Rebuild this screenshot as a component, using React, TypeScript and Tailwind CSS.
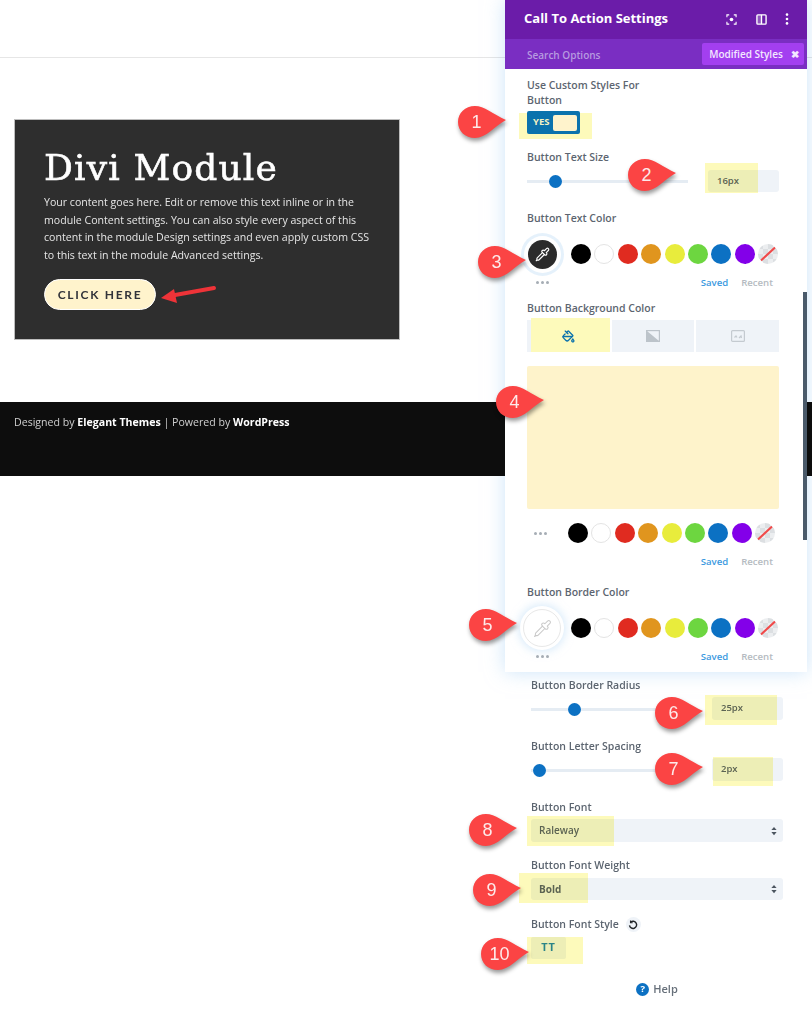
import React from "react";
import { Pipette, PaintBucket } from "lucide-react";

const swatchColors = ["bg-[#000000]", "bg-white border border-[#e4e4e4]", "bg-[#e02b20]", "bg-[#e0951e]", "bg-[#e8ec3c]", "bg-[#6dd640]", "bg-[#0c71c3]", "bg-[#8300e9]"];

function Label({ children, className = "" }: { children: React.ReactNode; className?: string }) {
  return <div className={`h-[15px] text-[10.5px] leading-[15px] font-semibold text-[#5c6570] whitespace-nowrap ${className}`}>{children}</div>;
}

function Swatches() {
  return (
    <div className="flex gap-[3.4px]">
      {swatchColors.map((c) => (
        <div key={c} className={`w-5 h-5 rounded-full ${c}`} />
      ))}
      <div className="w-5 h-5 rounded-full bg-[#eceef0] overflow-hidden">
        <svg viewBox="0 0 20 20" className="w-5 h-5">
          <path d="M0 0H5V5H0ZM10 0H15V5H10ZM5 5H10V10H5ZM15 5H20V10H15ZM0 10H5V15H0ZM10 10H15V15H10ZM5 15H10V20H5ZM15 15H20V20H15Z" fill="#dcdfe2" />
          <line x1="3" y1="16.5" x2="17" y2="3.5" stroke="#f04a4a" strokeWidth="2.2" />
        </svg>
      </div>
    </div>
  );
}

function Dots({ className = "" }: { className?: string }) {
  return (
    <div className={`flex gap-[2px] ${className}`}>
      <span className="w-[3px] h-[3px] rounded-full bg-[#a6adb5]" />
      <span className="w-[3px] h-[3px] rounded-full bg-[#a6adb5]" />
      <span className="w-[3px] h-[3px] rounded-full bg-[#a6adb5]" />
    </div>
  );
}

function SavedRecent() {
  return (
    <div className="flex gap-[13px] pr-[6px] pt-[1px] text-[9.6px] font-semibold leading-4">
      <span className="text-[#3c9ae0]">Saved</span>
      <span className="text-[#b5bbc1]">Recent</span>
    </div>
  );
}

function Slider({ value, knob }: { value: string; knob: string }) {
  return (
    <div className="flex items-center gap-5 h-full">
      <div className="relative flex-1 h-[3px] mt-[1px] bg-[#e5ecf3]">
        <div className={`absolute top-[-5px] w-[13px] h-[13px] rounded-full bg-[#0c71c3] ${knob}`} />
      </div>
      <div className="w-[71px] h-full rounded-[3px] bg-[#eff3f8] pl-[9px] text-[9.5px] font-semibold text-[#5c6570] flex items-center">{value}</div>
    </div>
  );
}

function Select({ value, bold }: { value: string; bold?: boolean }) {
  return (
    <div className={`h-full rounded-[3px] bg-[#eff3f8] pl-2 pr-[6px] flex items-center justify-between text-[10px] text-[#5c6570] ${bold ? "font-bold" : "font-semibold"}`}>
      <span>{value}</span>
      <svg viewBox="0 0 8 12" className="w-[6px] h-[10px]" fill="#4c5560">
        <path d="M4 0.5 7.5 4.8H0.5Z M4 11.5 7.5 7.2H0.5Z" />
      </svg>
    </div>
  );
}

function Marker({ n, pos }: { n: number; pos: string }) {
  return (
    <div className={`absolute w-[48px] h-[32px] ${pos}`}>
      <svg viewBox="0 0 48 32" className="absolute inset-0 w-[48px] h-[32px] overflow-visible drop-shadow-[1px_3px_2px_rgba(0,0,0,0.4)]">
        <path d="M17 0C26 0 35 8 48 14C37 20 28 32 17 32C7 32 0 25 0 16C0 7 7 0 17 0Z" fill="#fb4444" />
      </svg>
      <span className="absolute left-0 top-0 w-[37px] h-[32px] flex items-center justify-center text-[18px] text-[#fdeaea] font-['Liberation_Sans',sans-serif]">{n}</span>
    </div>
  );
}

function Hl({ pos }: { pos: string }) {
  return <div className={`absolute bg-[#fdfabb] mix-blend-multiply ${pos}`} />;
}

export default function App() {
  return (
    <div className="relative w-[812px] h-[1024px] overflow-hidden bg-white font-['Open_Sans',sans-serif]">
      {/* page */}
      <div className="h-[58px] border-b border-[#e6e6e6]" />
      <div className="mt-[61px] ml-[14px] w-[386px] h-[221px] bg-[#2e2e2e] border border-[#bdbdbd] pl-[29px] pt-[25px]">
        <div className="font-['DejaVu_Serif',serif] text-[36px] leading-[46px] text-white tracking-[1.15px] [-webkit-text-stroke:0.6px_white] whitespace-nowrap">Divi Module</div>
        <div className="mt-[3px] text-[10.6px] leading-[17.5px] text-[#e6e6e6] whitespace-nowrap">
          <div>Your content goes here. Edit or remove this text inline or in the</div>
          <div>module Content settings. You can also style every aspect of this</div>
          <div>content in the module Design settings and even apply custom CSS</div>
          <div>to this text in the module Advanced settings.</div>
        </div>
        <div className="mt-[15px] w-[112px] h-[31px] rounded-full bg-[#fff3cc] border border-white flex items-center justify-center text-[12px] font-bold tracking-[1.7px] text-[#33343a] font-['Lato',sans-serif]">CLICK HERE</div>
      </div>
      <div className="mt-[62px] h-[74px] bg-[#0d0d0d] pl-[14px] pt-[12px] text-[10.6px] leading-4 text-[#cfcfcf] whitespace-nowrap">
        Designed by <b className="text-white">Elegant Themes</b> | Powered by <b className="text-white">WordPress</b>
      </div>

      {/* soft glow of the modal: shows on the white page only */}
      <div className="absolute left-[505px] top-0 w-[302px] h-[672px] shadow-[0_0_18px_rgba(170,210,245,0.6)] mix-blend-multiply" />

      {/* settings modal */}
      <div className="absolute left-[505px] top-0 w-[307px] flex flex-col">
        <div className="relative w-[302px] h-[672px] bg-white">
          <div className="h-[39px] bg-[#6b1ca9] pl-[19px] pr-[18px] pb-[1px] flex items-center justify-between text-white">
            <span className="text-[13px] font-bold">Call To Action Settings</span>
            <div className="flex items-center">
              <svg viewBox="0 0 12 12" className="w-[11px] h-[11px]" fill="none" stroke="white" strokeWidth="1.2">
                <path d="M1 3.5V1H3.5M8.5 1H11V3.5M11 8.5V11H8.5M3.5 11H1V8.5" />
                <circle cx="6" cy="6" r="2" fill="white" stroke="none" />
              </svg>
              <svg viewBox="0 0 12 12" className="ml-[19px] w-[11px] h-[11px]" fill="none" stroke="white" strokeWidth="1.5">
                <rect x="1" y="1" width="10" height="10" rx="1" />
                <path d="M6 1V11" />
                <rect x="1" y="1" width="5" height="10" fill="white" fillOpacity="0.25" stroke="none" />
              </svg>
              <svg viewBox="0 0 4 12" className="ml-[18px] w-[4px] h-[12px]" fill="white">
                <circle cx="2" cy="1.6" r="1.3" />
                <circle cx="2" cy="6" r="1.3" />
                <circle cx="2" cy="10.4" r="1.3" />
              </svg>
            </div>
          </div>
          <div className="h-[30px] bg-[#7a2ec2] pl-[22px] pr-[3px] flex items-center justify-between">
            <span className="pt-[2px] text-[10px] font-semibold text-[#b79ae0]">Search Options</span>
            <div className="w-[102px] h-[22px] rounded-[2px] bg-[#a33ff0] flex items-center justify-center gap-[8px] pl-[2px] text-[10px] font-semibold text-[#f3e8ff]">
              <span>Modified Styles</span>
              <span className="text-[10px] font-bold">✖</span>
            </div>
          </div>

          <div className="pl-[22px] pr-[28px] pt-[9px] flex flex-col">
            <Label>Use Custom Styles For</Label>
            <Label>Button</Label>
            <div className="relative z-10 mt-[3px] w-[53px] h-[23px] rounded-[2px] bg-[#0b72ad] flex items-center pl-[6px] pr-[3px] justify-between">
              <span className="text-[9.5px] font-bold text-[#f5f3c4]">YES</span>
              <span className="w-[24px] h-[16px] rounded-[2px] bg-[#fff3cc]" />
            </div>

            <Label className="mt-[16px]">Button Text Size</Label>
            <div className="mt-[5px] h-[22px]">
              <Slider value="16px" knob="left-[22px]" />
            </div>

            <Label className="mt-[19px]">Button Text Color</Label>
            <div className="mt-[8px] h-[40px] flex items-center">
              <div className="ml-[1px] w-[29px] h-[29px] rounded-full bg-[#2b2b2b] shadow-[0_0_0_4px_white,0_0_0_7px_rgba(190,220,245,0.4)] flex items-center justify-center text-white">
                <Pipette size={15} strokeWidth={1.8} />
              </div>
              <div className="ml-[14px]">
                <Swatches />
              </div>
            </div>
            <div className="h-4 flex items-center justify-between">
              <Dots className="ml-[9px]" />
              <SavedRecent />
            </div>

            <Label className="mt-[11px]">Button Background Color</Label>
            <div className="mt-[4px] h-[32px] flex gap-[2px]">
              <div className="relative flex-1 bg-[#eff3f8] flex items-center justify-center text-[#0b72ad]">
                <div className="absolute left-[4px] right-0 top-[-2px] bottom-0 bg-[#fdfabb]" />
                <PaintBucket size={13} strokeWidth={2.4} className="relative" />
              </div>
              <div className="flex-1 bg-[#eff3f8] flex items-center justify-center">
                <svg viewBox="0 0 14 12" className="w-[14px] h-[12px]">
                  <rect x="0.6" y="0.6" width="12.8" height="10.8" fill="none" stroke="#bcc3ca" strokeWidth="1.2" />
                  <path d="M1 1 13 11H1Z" fill="#bcc3ca" />
                </svg>
              </div>
              <div className="flex-1 bg-[#eff3f8] flex items-center justify-center">
                <svg viewBox="0 0 14 12" className="w-[14px] h-[12px]" fill="none" stroke="#c4cad0" strokeWidth="1.2">
                  <rect x="0.6" y="0.6" width="12.8" height="10.8" rx="1" />
                  <path d="M3.5 7.5 5 6 6 7.5M8 8 10 6 10.5 8" />
                </svg>
              </div>
            </div>
            <div className="mt-[14px] h-[143px] bg-[#fef3cb] rounded-[2px]" />
            <div className="mt-[14px] h-5 flex items-center">
              <Dots className="ml-[7px]" />
              <div className="ml-[21px]">
                <Swatches />
              </div>
            </div>
            <div className="mt-[10px] h-4 flex justify-end">
              <SavedRecent />
            </div>

            <Label className="mt-[16px]">Button Border Color</Label>
            <div className="mt-[8px] h-[40px] flex items-center">
              <div className="ml-[-4px] w-[38px] h-[38px] rounded-full bg-white border border-[#e8e8e8] shadow-[0_0_0_3px_white,0_0_8px_5px_rgba(190,220,245,0.55)] flex items-center justify-center text-[#c9c9c9]">
                <Pipette size={19} strokeWidth={1.3} />
              </div>
              <div className="ml-[10px]">
                <Swatches />
              </div>
            </div>
            <div className="h-4 flex items-center justify-between">
              <Dots className="ml-[9px]" />
              <SavedRecent />
            </div>
          </div>

          {/* scrollbar */}
          <div className="absolute right-0 top-[292px] w-[4px] h-[248px] bg-[#4a5a6a]" />
        </div>

        <div className="pl-[26px] pr-[29px] pt-[6px] flex flex-col">
          <Label>Button Border Radius</Label>
          <div className="mt-[4px] h-[23px]">
            <Slider value="25px" knob="left-[37px]" />
          </div>
          <Label className="mt-[19px]">Button Letter Spacing</Label>
          <div className="mt-[4px] h-[23px]">
            <Slider value="2px" knob="left-[2px]" />
          </div>
          <Label className="mt-[19px]">Button Font</Label>
          <div className="mt-[4px] h-[23px]">
            <Select value="Raleway" />
          </div>
          <Label className="mt-[16px]">Button Font Weight</Label>
          <div className="mt-[5px] h-[22px]">
            <Select value="Bold" bold />
          </div>
          <div className="mt-[17px] flex items-center gap-[7px]">
            <Label>Button Font Style</Label>
            <div className="w-[15px] h-[15px] rounded-full bg-[#eff3f8] flex items-center justify-center">
              <svg viewBox="0 0 12 12" className="w-[10px] h-[10px]" fill="none" stroke="#22262a" strokeWidth="1.7">
                <path d="M3.2 2.6A4.3 4.3 0 1 1 1.8 6.4" />
                <path d="M3 0.6V3.2H5.6" strokeWidth="1.3" />
              </svg>
            </div>
          </div>
          <div className="mt-[5px] w-[35px] h-[22px] rounded-[2px] bg-[#eff3f8] pb-[1px] flex items-center justify-center text-[11px] font-bold text-[#2b87b8] tracking-[1px]">TT</div>
          <div className="mt-[22px] h-4 flex items-center justify-center gap-[4px] text-[11px] font-semibold text-[#67707a]">
            <span className="w-[13px] h-[13px] rounded-full bg-[#0c71c3] flex items-center justify-center text-[9.5px] font-bold text-white">?</span>
            <span>Help</span>
          </div>
        </div>
      </div>

      {/* highlights */}
      <div className="absolute left-[519px] top-[113px] w-[73px] h-[26px] bg-[#fdfabb]" />
      <Hl pos="left-[705px] top-[163px] w-[53px] h-[30px]" />
      <Hl pos="left-[705px] top-[695px] w-[72px] h-[30px]" />
      <Hl pos="left-[713px] top-[757px] w-[60px] h-[29px]" />
      <Hl pos="left-[527px] top-[816px] w-[87px] h-[30px]" />
      <Hl pos="left-[519px] top-[873px] w-[69px] h-[30px]" />
      <Hl pos="left-[527px] top-[937px] w-[56px] h-[27px]" />

      {/* arrow */}
      <svg viewBox="0 0 60 20" className="absolute left-[159px] top-[284px] w-[60px] h-[20px]">
        <path d="M55 4 16 11" stroke="#ee3338" strokeWidth="4" strokeLinecap="round" />
        <path d="M2 14 15 5 18 19Z" fill="#ee3338" />
      </svg>

      {/* numbered markers */}
      <Marker n={1} pos="left-[458px] top-[106px]" />
      <Marker n={2} pos="left-[628px] top-[159px]" />
      <Marker n={3} pos="left-[478px] top-[246px]" />
      <Marker n={4} pos="left-[496px] top-[386px]" />
      <Marker n={5} pos="left-[469px] top-[609px]" />
      <Marker n={6} pos="left-[655px] top-[697px]" />
      <Marker n={7} pos="left-[655px] top-[753px]" />
      <Marker n={8} pos="left-[469px] top-[814px]" />
      <Marker n={9} pos="left-[473px] top-[874px]" />
      <Marker n={10} pos="left-[481px] top-[938px]" />
    </div>
  );
}
